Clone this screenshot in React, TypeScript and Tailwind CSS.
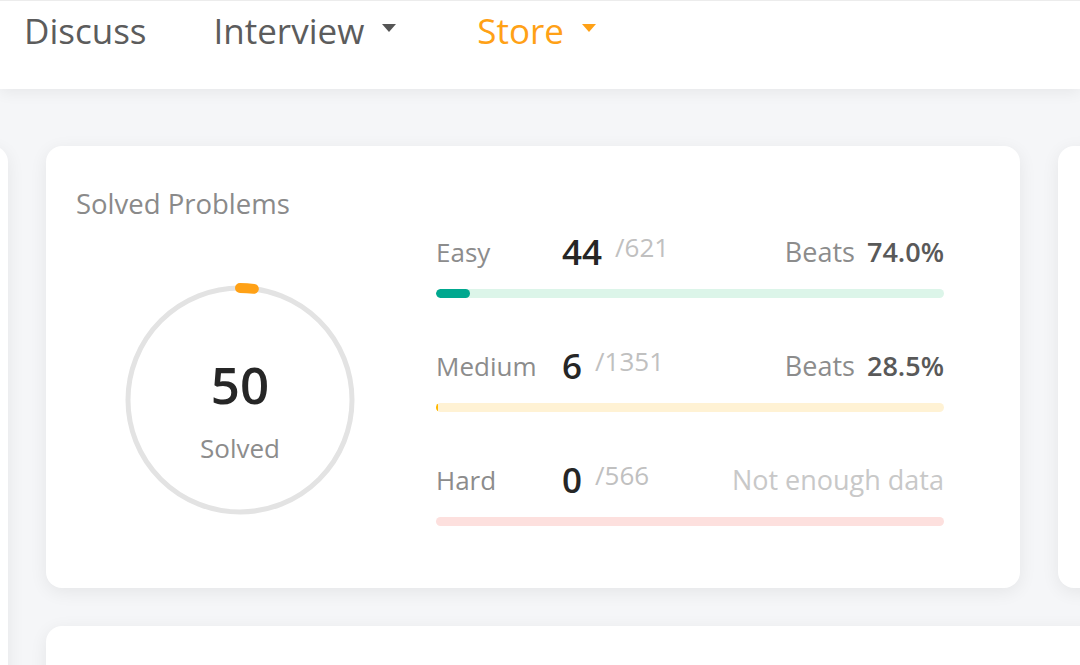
import React from "react";

const font = { fontFamily: '"Open Sans", "Noto Sans", sans-serif' };

function Caret({ color }: { color: string }) {
  return (
    <svg width="16" height="10" viewBox="0 0 16 10" className="ml-[17px] mt-[-6px]">
      <path d="M1 1 L15 1 L8 9 Z" fill={color} />
    </svg>
  );
}

type Row = {
  label: string;
  solved: number;
  total: number;
  right: React.ReactNode;
  track: string;
  fill: string;
  pct: number;
};

const rows: Row[] = [
  {
    label: "Easy",
    solved: 44,
    total: 621,
    right: (
      <>
        <span className="text-[#8c8c8c]">Beats</span>
        <span className="ml-[12px] font-semibold text-[#595959]">74.0%</span>
      </>
    ),
    track: "bg-[#dcf5e9]",
    fill: "bg-[#00a88f]",
    pct: 6.7,
  },
  {
    label: "Medium",
    solved: 6,
    total: 1351,
    right: (
      <>
        <span className="text-[#8c8c8c]">Beats</span>
        <span className="ml-[12px] font-semibold text-[#595959]">28.5%</span>
      </>
    ),
    track: "bg-[#fff2d4]",
    fill: "bg-[#ffb800]",
    pct: 0.45,
  },
  {
    label: "Hard",
    solved: 0,
    total: 566,
    right: <span className="text-[#c8c8c8]">Not enough data</span>,
    track: "bg-[#fde0de]",
    fill: "bg-[#ef4743]",
    pct: 0,
  },
];

function Ring() {
  const r = 112;
  const c = 2 * Math.PI * r;
  const arc = 14;
  return (
    <svg width="240" height="240" viewBox="0 0 240 240" className="mt-[58px] ml-[44px] shrink-0">
      <circle cx="120" cy="120" r={r} fill="none" stroke="#e3e3e3" strokeWidth="5" />
      <circle
        cx="120"
        cy="120"
        r={r}
        fill="none"
        stroke="#ffa116"
        strokeWidth="10"
        strokeLinecap="round"
        strokeDasharray={`${arc} ${c}`}
        transform="rotate(-90 120 120)"
      />
      <text x="120" y="124" textAnchor="middle" fontSize="51" fontWeight="600" fill="#262626" style={font}>
        50
      </text>
      <text x="120" y="178" textAnchor="middle" fontSize="26" fill="#8c8c8c" style={font}>
        Solved
      </text>
    </svg>
  );
}

const card = "bg-white rounded-[16px] shadow-[0_4px_18px_rgba(0,0,0,0.07)]";

export default function App() {
  return (
    <div className="w-[1080px] h-[665px] overflow-hidden bg-[#f5f6f8] border-t border-[#ececec]" style={font}>
      {/* Nav */}
      <nav className="h-[88px] bg-white shadow-[0_4px_14px_rgba(0,0,0,0.06)] flex items-start pt-[7px] pl-[24px] text-[35px] text-[#5c5c5c] relative z-10">
        <span className="leading-[46px]">Discuss</span>
        <span className="ml-[67px] flex items-center leading-[46px]">
          Interview
          <Caret color="#555555" />
        </span>
        <span className="ml-[80px] flex items-center leading-[46px] text-[#ffa116]">
          Store
          <Caret color="#ffa116" />
        </span>
      </nav>

      <div className="flex gap-[38px] pt-[57px]">
        {/* left column edge */}
        <div className={`w-[300px] -ml-[292px] shrink-0 h-[700px] ${card}`} />

        <div className="flex flex-col gap-[38px] shrink-0">
          <div className="flex gap-[38px] h-[442px]">
            <section className={`w-[974px] shrink-0 ${card} pt-[40px] px-[30px]`}>
              <h2 className="text-[27.5px] leading-[36px] text-[#8a8a8a]">Solved Problems</h2>
              <div className="flex">
                <Ring />
                <div className="ml-[76px] w-[508px] mt-[10px] flex flex-col">
                  {rows.map((row, i) => (
                    <div key={row.label} className={i > 0 ? "mt-[48px]" : ""}>
                      <div className="flex items-center h-[40px] text-[26px]">
                        <span className="w-[126px] text-[#8c8c8c]">{row.label}</span>
                        <span className="text-[35px] font-semibold text-[#262626] leading-[40px]">{row.solved}</span>
                        <span className="ml-[13px] text-[26px] text-[#c0c0c0] -mt-[10px]">/{row.total}</span>
                        <span className="ml-auto flex items-center text-[27px]">{row.right}</span>
                      </div>
                      <div className={`mt-[17px] h-[9px] rounded-full ${row.track} overflow-hidden`}>
                        <div className={`h-full rounded-full ${row.fill}`} style={{ width: `${row.pct}%` }} />
                      </div>
                    </div>
                  ))}
                </div>
              </div>
            </section>

            <div className={`w-[300px] shrink-0 ${card}`} />
          </div>

          <div className={`w-[1200px] h-[200px] ${card}`} />
        </div>
      </div>
    </div>
  );
}
